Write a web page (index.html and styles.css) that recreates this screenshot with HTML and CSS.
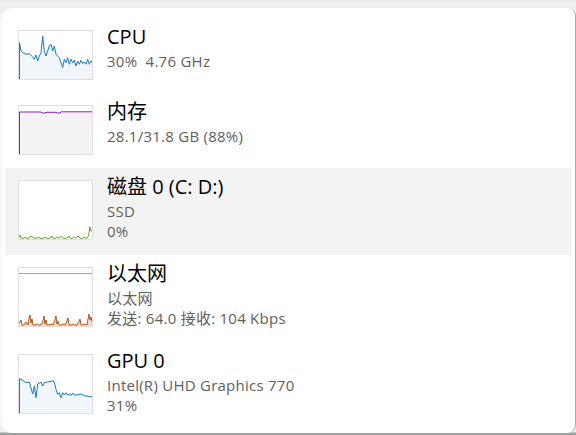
FILE: index.html
```html
<!DOCTYPE html>
<html lang="zh">
<head>
<meta charset="utf-8">
<title>性能</title>
<link rel="stylesheet" href="styles.css">
</head>
<body>
<div class="screen">
  <div class="panel">
    <div class="row">
      <div class="graph h50">
        <svg viewBox="0 0 73 48" preserveAspectRatio="none">
          <polygon class="cpu-fill" points="0,48 0,11.7 2,20 3.7,21.7 7,23.3 10.3,22.7 13.7,26 15.3,28.3 17,24 18.7,30 20.3,25 22,21.7 23.7,5 25.3,20 27,25 28.7,20 30.3,15 32,13.3 33.7,20 35.3,15 37,23.3 38.7,25 40.3,26.7 42,31.7 43.7,36.7 45.3,28.3 47,31.7 48.7,26.7 50.3,33.3 52,28.3 53.7,31.7 55.3,29.3 57,35 58.7,30 60.3,33.3 62,29.3 63.7,32.7 65.3,31 67,33.3 68.7,28.3 70.3,33.3 72,30 73,31 73,48"/>
          <polyline class="cpu-line" points="0.5,48 0.5,11.7 2,20 3.7,21.7 7,23.3 10.3,22.7 13.7,26 15.3,28.3 17,24 18.7,30 20.3,25 22,21.7 23.7,5 25.3,20 27,25 28.7,20 30.3,15 32,13.3 33.7,20 35.3,15 37,23.3 38.7,25 40.3,26.7 42,31.7 43.7,36.7 45.3,28.3 47,31.7 48.7,26.7 50.3,33.3 52,28.3 53.7,31.7 55.3,29.3 57,35 58.7,30 60.3,33.3 62,29.3 63.7,32.7 65.3,31 67,33.3 68.7,28.3 70.3,33.3 72,30 73,31"/>
        </svg>
      </div>
      <div class="info">
        <div class="title">CPU</div>
        <div class="sub">30%&nbsp; 4.76 GHz</div>
      </div>
    </div>

    <div class="row">
      <div class="graph h50">
        <svg viewBox="0 0 73 48" preserveAspectRatio="none">
          <polygon class="mem-fill" points="0,48 0,6 22,6 23,7 26,7 27,6.3 37,6.3 38,7 41,7 42,6 73,6 73,48"/>
          <polyline class="mem-line" points="0.5,48 0.5,6 22,6 23,7 26,7 27,6.3 37,6.3 38,7 41,7 42,5.8 73,5.8"/>
        </svg>
      </div>
      <div class="info">
        <div class="title">内存</div>
        <div class="sub">28.1/31.8 GB (88%)</div>
      </div>
    </div>

    <div class="row tall active">
      <div class="graph h60">
        <svg viewBox="0 0 73 58" preserveAspectRatio="none">
          <polyline class="disk-line" points="0,56 1,54 2,57 4,57.5 6,56 8,57.5 10,57 12,55 13,55.5 15,57 17,57.5 19,56 21,57 23,57.5 25,57 27,56.5 29,57.5 31,57 33,55 34,57 36,57.5 38,56 40,57 42,55.5 44,57 46,57.5 48,57 50,55 51,57 53,57.5 55,56 57,57 59,55 61,57 63,57.5 65,56 67,57.5 69,56 70,52 71,46 72,50 73,49"/>
        </svg>
      </div>
      <div class="info">
        <div class="title">磁盘 0 (C: D:)</div>
        <div class="sub">SSD</div>
        <div class="sub">0%</div>
      </div>
    </div>

    <div class="row tall">
      <div class="graph h60">
        <svg viewBox="0 0 73 58" preserveAspectRatio="none">
          <line class="eth-top" x1="0" y1="5.5" x2="73" y2="5.5"/>
          <polygon class="eth-fill" points="0,58 0,55 2,52 3,57 5,57 7,54 9,57 10,50 11,47 12,55 13,51 14,57 16,57 18,56 20,57 22,57 24,53 25,48 26,56 27,52 28,57 30,57 32,56 34,57 36,52 37,48 38,56 39,53 40,57 42,57 44,56 46,57 48,53 49,50 50,57 52,57 54,56 56,57 58,57 60,54 61,51 62,57 64,57 66,56 68,57 69,51 70,46 71,52 72,49 73,54 73,58"/>
          <polyline class="eth-line" points="0,55 2,52 3,57 5,57 7,54 9,57 10,50 11,47 12,55 13,51 14,57 16,57 18,56 20,57 22,57 24,53 25,48 26,56 27,52 28,57 30,57 32,56 34,57 36,52 37,48 38,56 39,53 40,57 42,57 44,56 46,57 48,53 49,50 50,57 52,57 54,56 56,57 58,57 60,54 61,51 62,57 64,57 66,56 68,57 69,51 70,46 71,52 72,49 73,54"/>
        </svg>
      </div>
      <div class="info">
        <div class="title">以太网</div>
        <div class="sub">以太网</div>
        <div class="sub">发送: 64.0 接收: 104 Kbps</div>
      </div>
    </div>

    <div class="row tall">
      <div class="graph h60">
        <svg viewBox="0 0 73 58" preserveAspectRatio="none">
          <polygon class="cpu-fill" points="0,58 0,23.7 2,24.3 7,27.7 10.3,27 13.7,39 15.3,31 17,42.7 18.7,29 22,27 23.7,31 25.3,27.7 28.7,27 33.7,26 35.3,27 37,34.3 38.7,39.3 40.3,37.7 42,42.7 43.7,37.7 45.3,40 47,37.7 48.7,40 50.3,39 52,40.7 53.7,38 55.3,40 58.7,39.7 62,39 65.3,40.7 73,41.7 73,58"/>
          <polyline class="cpu-line" points="0.5,58 0.5,23.7 2,24.3 7,27.7 10.3,27 13.7,39 15.3,31 17,42.7 18.7,29 22,27 23.7,31 25.3,27.7 28.7,27 33.7,26 35.3,27 37,34.3 38.7,39.3 40.3,37.7 42,42.7 43.7,37.7 45.3,40 47,37.7 48.7,40 50.3,39 52,40.7 53.7,38 55.3,40 58.7,39.7 62,39 65.3,40.7 73,41.7"/>
        </svg>
      </div>
      <div class="info">
        <div class="title">GPU 0</div>
        <div class="sub">Intel(R) UHD Graphics 770</div>
        <div class="sub">31%</div>
      </div>
    </div>
  </div>
</div>
</body>
</html>
```

FILE: styles.css
```css
html, body {
  margin: 0;
  padding: 0;
}
body {
  width: 576px;
  height: 435px;
  overflow: hidden;
  background: #eeeeee;
  font-family: "Open Sans", "Noto Sans CJK SC", sans-serif;
}
.screen {
  height: 435px;
  padding-top: 8px;
  box-sizing: border-box;
  background: linear-gradient(#e6e9e2 0, #f0f0f0 3px, #f0f0f0 432px, #9aa39e 433px);
}
.panel {
  width: 576px;
  height: 425px;
  box-sizing: border-box;
  background: #ffffff;
  border-radius: 12px 8px 8px 12px;
  border-right: 1px solid #a9a9a9;
  box-shadow: inset 3px 0 4px -2px rgba(0, 0, 0, 0.06);
  padding-top: 10px;
}
.row {
  display: flex;
  align-items: flex-start;
  gap: 14px;
  padding: 12px 0 13px 18px;
}
.row.tall {
  padding-bottom: 14px;
}
.row.active {
  background: #f3f3f3;
  margin: 0 3px 0 5px;
  padding-left: 13px;
}
.graph {
  flex: none;
  width: 75px;
  box-sizing: border-box;
  border: 1px solid #dedede;
  background: #ffffff;
}
.graph svg {
  display: block;
  width: 100%;
  height: 100%;
}
.h50 { height: 50px; }
.h60 { height: 60px; }
.info {
  display: flex;
  flex-direction: column;
  min-width: 0;
}
.title {
  font-size: 20px;
  line-height: 28px;
  margin-top: -7px;
  color: #000000;
}
.sub {
  font-size: 15px;
  line-height: 20px;
  letter-spacing: 0.25px;
  color: #606060;
  white-space: nowrap;
}
.cpu-fill { fill: #f1f6fa; }
.cpu-line { fill: none; stroke: #1a7cc1; stroke-width: 1; }
.mem-fill { fill: #f4f2f5; }
.mem-line { fill: none; stroke: #8b1fb0; stroke-width: 1; }
.disk-line { fill: none; stroke: #5ea82a; stroke-width: 1; }
.eth-top { stroke: #cf9468; stroke-width: 1.2; }
.eth-fill { fill: #f6dcc8; }
.eth-line { fill: none; stroke: #b0561a; stroke-width: 1; }
```
